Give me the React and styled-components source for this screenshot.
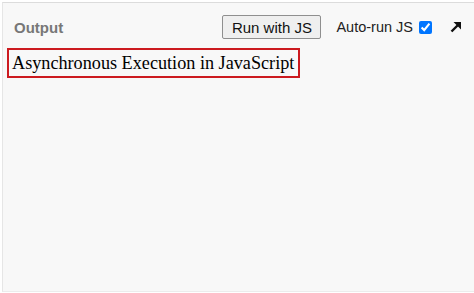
import React from "react";
import styled, { createGlobalStyle } from "styled-components";

const Global = createGlobalStyle`
  html, body { margin: 0; padding: 0; background: #ffffff; }
  #root { height: 293px; }
`;

const Page = styled.div`
  height: 293px;
  padding-top: 2px;
  padding-left: 2px;
  box-sizing: border-box;
  display: flex;
`;

const Panel = styled.section`
  flex: 1;
  display: flex;
  flex-direction: column;
  background: #f8f8f8;
  border-top: 1px solid #dcdcdc;
  border-left: 1px solid #e6e6e6;
  border-bottom: 1px solid #ececec;
  margin-bottom: 1px;
`;

const Header = styled.header`
  display: flex;
  align-items: center;
  justify-content: space-between;
  padding: 12px 12px 0 11px;
  height: 24px;
`;

const Title = styled.h2`
  margin: 0;
  font-family: "Liberation Sans", Arial, sans-serif;
  font-weight: bold;
  font-size: 15px;
  color: #777777;
`;

const Controls = styled.div`
  display: flex;
  align-items: center;
`;

const RunButton = styled.button`
  height: 24px;
  width: 99px;
  padding: 0;
  font-family: "Liberation Sans", Arial, sans-serif;
  font-size: 15px;
  color: #111;
  background: #efefef;
  border: 1px solid #8f8f8f;
  border-radius: 2px;
  margin-right: 15px;
  margin-left: 1px;
`;

const Label = styled.label`
  display: flex;
  align-items: center;
  font-family: "Liberation Sans", Arial, sans-serif;
  font-size: 14.5px;
  color: #222;
  gap: 6px;
  margin-right: 18px;
`;

const Check = styled.input`
  width: 13px;
  height: 13px;
  margin: 0;
  accent-color: #0075ff;
`;

const Expand = styled.button`
  border: none;
  background: none;
  padding: 0;
  width: 12px;
  height: 12px;
  display: flex;
  color: #111;
`;

const Body = styled.div`
  padding: 9px 0 0 4px;
`;

const Result = styled.div`
  display: inline-block;
  border: 2px solid #cc1a1f;
  padding: 2px 4px 2px 3px;
  font-family: "Liberation Serif", "Times New Roman", serif;
  font-size: 18.2px;
  line-height: 22px;
  color: #000;
`;

export default function App() {
  return (
    <>
      <Global />
      <Page>
        <Panel>
          <Header>
            <Title>Output</Title>
            <Controls>
              <RunButton>Run with JS</RunButton>
              <Label>
                Auto-run JS
                <Check type="checkbox" defaultChecked />
              </Label>
              <Expand aria-label="Open in new window">
                <svg width="12" height="12" viewBox="0 0 12 12">
                  <path d="M1.5 10.5 L9 3" stroke="#111" strokeWidth="2.4" fill="none" />
                  <path d="M3.5 1 H11 V8.5 Z" fill="#111" />
                </svg>
              </Expand>
            </Controls>
          </Header>
          <Body>
            <Result>Asynchronous Execution in JavaScript</Result>
          </Body>
        </Panel>
      </Page>
    </>
  );
}
